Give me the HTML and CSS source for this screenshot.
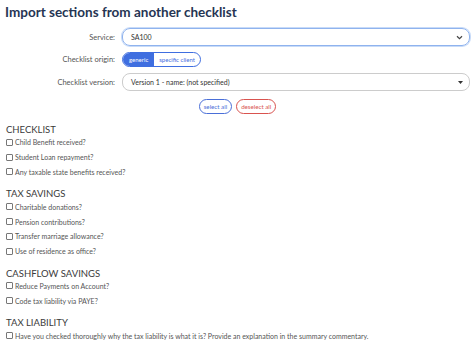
FILE: index.html
```html
<!DOCTYPE html>
<html lang="en">
<head>
    <meta charset="UTF-8">
    <title>Import sections from another checklist</title>
    <link rel="stylesheet" href="styles.css">
</head>
<body>
    <div class="page">
        <h1>Import sections from another checklist</h1>

        <div class="form-row">
            <label class="row-label">Service:</label>
            <div class="fake-select focused">
                <span>SA100</span>
                <svg class="chev" width="7" height="5" viewBox="0 0 7 5"><path d="M1 1.2 L3.5 3.6 L6 1.2" fill="none" stroke="#444" stroke-width="1.2"/></svg>
            </div>
        </div>

        <div class="form-row">
            <label class="row-label">Checklist origin:</label>
            <div class="toggle">
                <span class="toggle-opt active">generic</span>
                <span class="toggle-opt">specific client</span>
            </div>
        </div>

        <div class="form-row">
            <label class="row-label">Checklist version:</label>
            <div class="fake-select">
                <span>Version 1 - name: (not specified)</span>
                <svg class="caret" width="5" height="3" viewBox="0 0 5 3"><path d="M0 0 L5 0 L2.5 3 Z" fill="#333"/></svg>
            </div>
        </div>

        <div class="actions">
            <button class="pill blue">select all</button>
            <button class="pill red">deselect all</button>
        </div>

        <div class="section">
            <h2>CHECKLIST</h2>
            <label class="item"><input type="checkbox"> Child Benefit received?</label>
            <label class="item"><input type="checkbox"> Student Loan repayment?</label>
            <label class="item"><input type="checkbox"> Any taxable state benefits received?</label>
        </div>

        <div class="section">
            <h2>TAX SAVINGS</h2>
            <label class="item"><input type="checkbox"> Charitable donations?</label>
            <label class="item"><input type="checkbox"> Pension contributions?</label>
            <label class="item"><input type="checkbox"> Transfer marriage allowance?</label>
            <label class="item"><input type="checkbox"> Use of residence as office?</label>
        </div>

        <div class="section">
            <h2>CASHFLOW SAVINGS</h2>
            <label class="item"><input type="checkbox"> Reduce Payments on Account?</label>
            <label class="item"><input type="checkbox"> Code tax liability via PAYE?</label>
        </div>

        <div class="section">
            <h2>TAX LIABILITY</h2>
            <label class="item"><input type="checkbox"> Have you checked thoroughly why the tax liability is what it is? Provide an explanation in the summary commentary.</label>
        </div>
    </div>
</body>
</html>
```

FILE: styles.css
```css
body {
    font-family: Lato, "Open Sans", sans-serif;
    color: #444;
    background-color: #fff;
    margin: 0;
}
.page {
    padding: 3px 4px 0 5px;
}
h1 {
    font-size: 13.5px;
    font-weight: bold;
    color: #263553;
    margin: 0 0 7px 0;
    line-height: 18px;
}
.form-row {
    display: flex;
    align-items: center;
    gap: 7px;
    margin-bottom: 6px;
}
.row-label {
    width: 110px;
    text-align: right;
    font-size: 7.5px;
    color: #555;
}
.fake-select {
    flex: 1;
    display: flex;
    align-items: center;
    justify-content: space-between;
    height: 16px;
    padding: 0 6px 0 8px;
    border: 1px solid #ccc;
    border-radius: 8px;
    font-size: 7px;
    color: #333;
}
.fake-select.focused {
    border-color: #8fb3ee;
    box-shadow: 0 0 0 1px #c8dbf8;
}
.toggle {
    display: flex;
    border: 1px solid #3f6ee0;
    border-radius: 8px;
    overflow: hidden;
    height: 13px;
    margin: 0;
}
.toggle-opt {
    display: flex;
    align-items: center;
    padding: 0 5px;
    font-size: 6px;
    color: #3f6ee0;
}
.toggle-opt.active {
    background-color: #3f6ee0;
    color: #fff;
    padding: 0 6px;
}
.actions {
    display: flex;
    justify-content: center;
    gap: 4px;
    margin: 8px 0 10px 0;
}
.pill {
    font-family: Lato, sans-serif;
    font-size: 6.2px;
    background: #fff;
    border-radius: 8px;
    height: 15px;
    padding: 0 4px;
    cursor: pointer;
}
.pill.blue {
    border: 1px solid #4a6fd8;
    color: #4a6fd8;
}
.pill.red {
    border: 1px solid #d9534f;
    color: #d9534f;
}
.section {
    margin-bottom: 9px;
}
h2 {
    font-size: 9.5px;
    font-weight: normal;
    color: #3a3a3a;
    margin: 0 0 0 1px;
    line-height: 11px;
}
.item {
    display: flex;
    align-items: center;
    gap: 1px;
    font-size: 7px;
    color: #555;
    height: 14.8px;
}
.item input {
    appearance: none;
    -webkit-appearance: none;
    width: 7px;
    height: 7px;
    margin: 0 1px 0 1px;
    border: 1px solid #777;
    border-radius: 1px;
    background: #fff;
}
```
